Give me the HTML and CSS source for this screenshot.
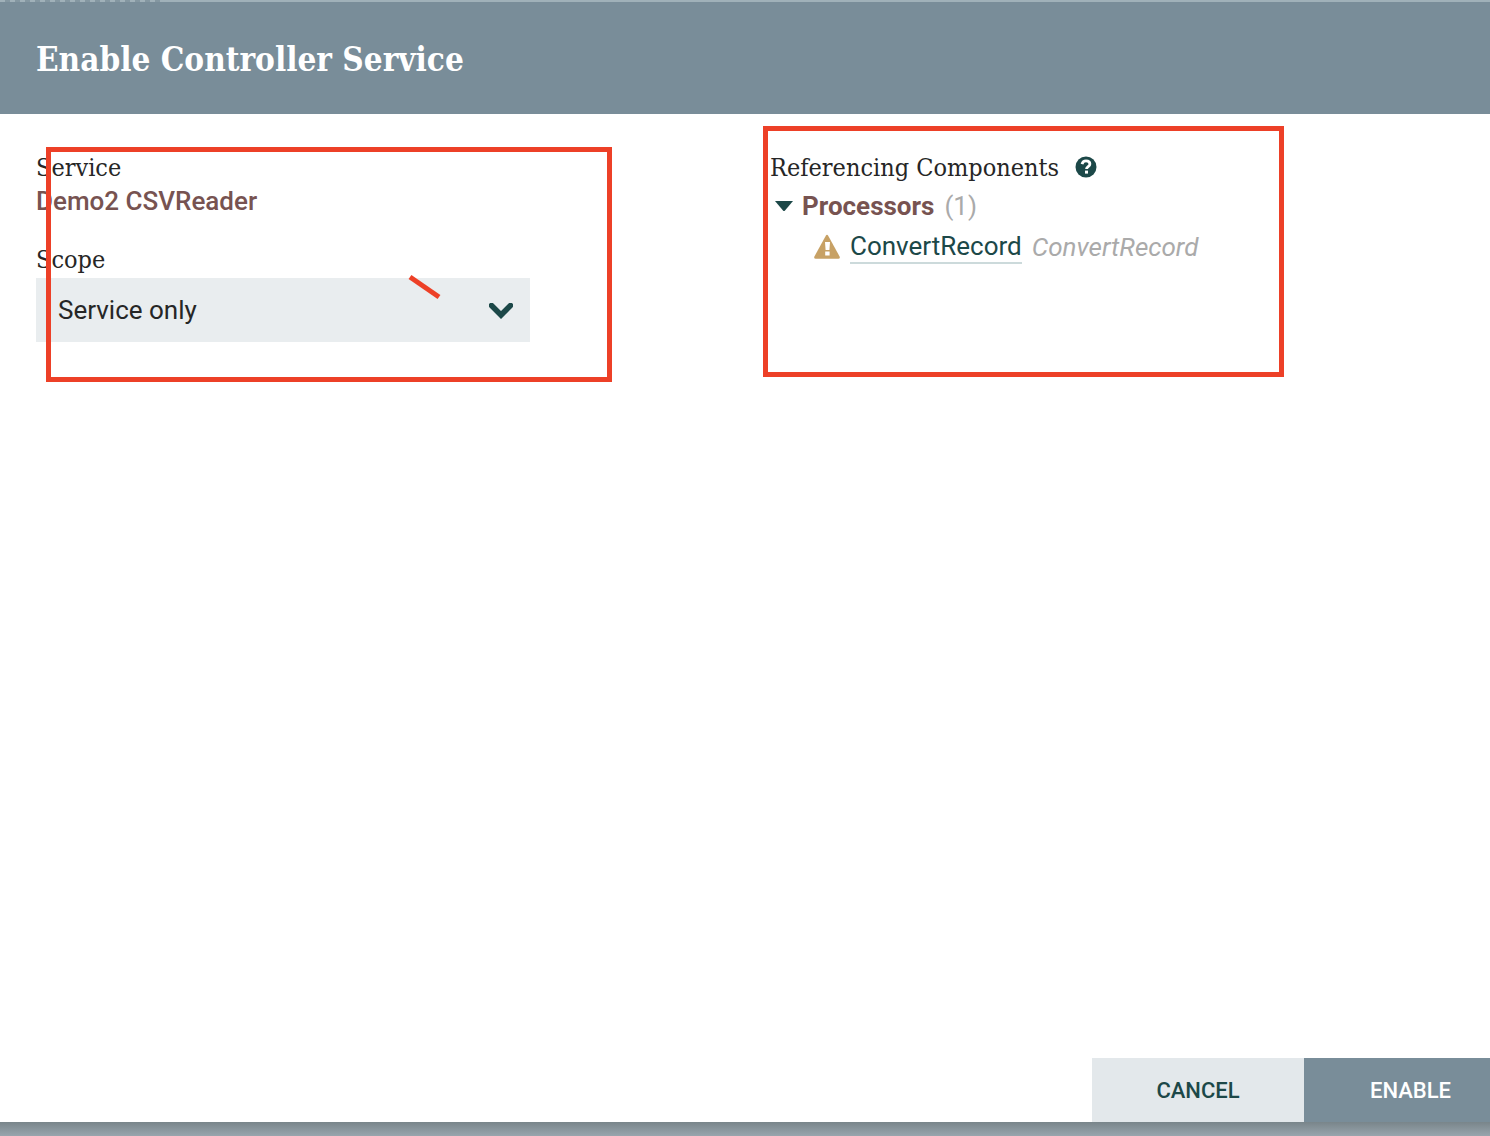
FILE: index.html
```html
<!DOCTYPE html>
<html lang="en">
<head>
<meta charset="UTF-8">
<meta name="viewport" content="width=device-width, initial-scale=1.0">
<title>Enable Controller Service</title>
<link rel="stylesheet" href="styles.css">
</head>
<body>
<div class="backdrop-top"></div>

<main class="dialog">
  <header class="dialog-header">
    <h1>Enable Controller Service</h1>
  </header>

  <div class="dialog-content">
    <section class="settings">
      <div class="setting-name">Service</div>
      <div class="service-name">Demo2 CSVReader</div>
      <label class="setting-name" for="scope">Scope</label>
      <div class="combo">
        <select id="scope">
          <option>Service only</option>
          <option>Service and referencing components</option>
        </select>
        <svg class="combo-arrow" width="24" height="16" viewBox="0 0 24 16"><path d="M2.500 2.500l9.500 9.500 9.500-9.500" fill="none" stroke="#1c4848" stroke-width="5.500" stroke-linecap="round"/></svg>
      </div>
    </section>

    <section class="references">
      <div class="setting-name">Referencing Components
        <svg class="help" width="22" height="22" viewBox="0 0 22 22"><circle cx="11" cy="11" r="10.5" fill="#1c4848"/><path d="M7 8.2C7.6 5.8 9 4.9 11 4.9c2.300 0 3.900 1.200 3.900 3.100 0 2.600-3.400 2.600-3.400 5.100" fill="none" stroke="#fff" stroke-width="2.800"/><path d="M10 14.600h3v3h-3z" fill="#fff"/></svg>
      </div>
      <div class="group">
        <svg class="twist" width="20" height="12" viewBox="0 0 20 12"><path d="M1 1h18l-8 9.500q-1 1-2 0z" fill="#1c4848"/></svg>
        <span class="group-name">Processors</span>
        <span class="count">(1)</span>
      </div>
      <div class="component">
        <svg class="warning" width="26" height="26" viewBox="0 0 26 26"><path d="M11.800 1.700q1.200-2 2.400 0L25.600 22.500q.7 2-1.300 2.200H1.700q-2-.2-1.300-2.200z" fill="#c7a165"/><path d="M11 8h5l-.6 8h-3.800zM11.200 17.600h4.400v4h-4.400z" fill="#fff"/></svg>
        <a href="#">ConvertRecord</a>
        <span class="type">ConvertRecord</span>
      </div>
    </section>
  </div>

  <footer class="dialog-buttons">
    <button class="cancel" type="button">CANCEL</button>
    <button class="enable" type="button">ENABLE</button>
  </footer>
</main>

<div class="backdrop-bottom"></div>

<!-- red markup over the dialog -->
<div class="mark mark-settings"></div>
<div class="mark mark-references"></div>
<svg class="mark-stroke" width="34" height="26" viewBox="0 0 34 26"><path d="M2 3l29 20" stroke="#ed4027" stroke-width="5"/></svg>
</body>
</html>
```

FILE: styles.css
```css
* { box-sizing: border-box; }
body { display: flex; flex-direction: column; position: relative; min-height: 100vh; margin: 0; background: #fff; color: #262626; font-family: Roboto, sans-serif; font-size: 26px; }

.backdrop-top { height: 2px; background: repeating-linear-gradient(90deg, #a0b1b9 0 5px, #8497a1 5px 10px) 0 0 / 160px 2px no-repeat #a0b1b9; }
.backdrop-bottom { height: 14px; background: linear-gradient(#79858a, #98a5ad); }

.dialog { display: flex; flex: 1; flex-direction: column; }
.dialog-header { display: flex; align-items: center; height: 112px; padding: 2px 36px 0; background: #798d99; }
.dialog-header h1 { margin: 0; color: #fff; font-family: "Roboto Slab", "DejaVu Serif Condensed", "DejaVu Serif", serif; font-size: 33px; font-weight: bold; white-space: nowrap; }

.dialog-content { display: grid; flex: 1; grid-template-columns: 1fr 1fr; align-items: start; gap: 14px; padding: 37px 0 0 36px; }
.setting-name { display: flex; align-items: center; gap: 16px; height: 32px; font-family: "Roboto Slab", "DejaVu Serif Condensed", "DejaVu Serif", serif; font-size: 25px; white-space: nowrap; }
.service-name { height: 36px; margin-bottom: 24px; color: #775351; font-weight: 500; line-height: 36px; }

.combo { position: relative; width: 494px; max-width: 100%; margin-top: 3px; }
.combo select { display: block; width: 100%; height: 64px; padding: 0 60px 0 22px; border: 0; border-radius: 0; background: #e9edef; color: #262626; font: inherit; appearance: none; }
.combo-arrow { position: absolute; top: 25px; right: 17px; pointer-events: none; }

.group { display: flex; align-items: center; height: 45px; padding-left: 4px; }
.group-name { margin: 0 10px 0 8px; color: #775351; font-weight: bold; }
.count { color: #aaa; }
.component { display: flex; align-items: center; height: 38px; padding-left: 44px; }
.component a { margin: 0 10px; border-bottom: 2px solid #ccdadb; color: #1c4848; line-height: 32px; text-decoration: none; }
.type { color: #aaa; font-style: italic; }

.dialog-buttons { display: flex; justify-content: flex-end; }
.dialog-buttons button { height: 64px; border: 0; font-family: inherit; font-size: 22px; font-weight: 500; }
.cancel { width: 212px; background: #e3e8eb; color: #1c4848; }
.enable { width: 186px; padding: 0 40px 0 66px; background: #798d99; color: #fff; }

.mark { position: absolute; border: 5px solid #ed4027; pointer-events: none; }
.mark-settings { top: 147px; left: 46px; width: 566px; height: 235px; }
.mark-references { top: 126px; left: 763px; width: 521px; height: 251px; }
.mark-stroke { position: absolute; top: 274px; left: 408px; pointer-events: none; }
```
